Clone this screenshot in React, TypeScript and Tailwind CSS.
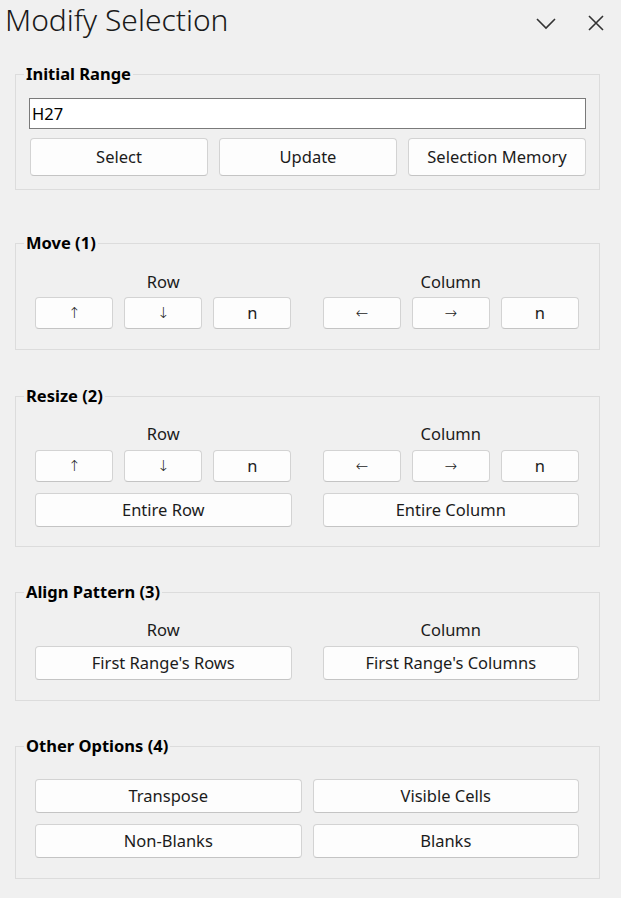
import type { ReactNode } from "react";

const font = { fontFamily: '"Noto Sans", "Open Sans", sans-serif' };
const arrowFont = { fontFamily: '"DejaVu Sans", "Liberation Sans", sans-serif' };

function Btn({ children, className = "" }: { children: ReactNode; className?: string }) {
  return (
    <button
      className={`flex items-center justify-center rounded-[4px] border border-[#d3d3d3] border-b-[#c4c4c4] bg-[#fdfdfd] text-[16.5px] text-[#1b1b1b] ${className}`}
    >
      {children}
    </button>
  );
}

function Group({
  title,
  className = "",
  inner = "",
  children,
}: {
  title: string;
  className?: string;
  inner?: string;
  children: ReactNode;
}) {
  return (
    <fieldset className={`ml-[15px] mr-[21px] border border-[#dcdcdc] ${className}`}>
      <legend className="ml-[8px] px-[2px] text-[16.5px] font-bold leading-[22px] text-black">
        {title}
      </legend>
      <div className={inner}>{children}</div>
    </fieldset>
  );
}

function ArrowRow({ labels }: { labels: string[] }) {
  return (
    <div className="flex gap-[11px]">
      {labels.map((l, i) => (
        <Btn key={i} className="h-[32px] w-[78px]">
          {l === "n" ? (
            l
          ) : (
            <span style={arrowFont} className="text-[15px] font-light leading-none">
              {l}
            </span>
          )}
        </Btn>
      ))}
    </div>
  );
}

function Label({ children }: { children: ReactNode }) {
  return <div className="text-[16.5px] leading-[22px] text-[#1b1b1b]">{children}</div>;
}

export default function App() {
  return (
    <div className="h-[898px] w-[621px] overflow-hidden bg-[#f0f0f0] text-black" style={font}>
      {/* header */}
      <div className="flex h-[63px] items-start justify-between">
        <h1 className="ml-[5px] mt-[0px] text-[30px] font-light leading-[40px] text-[#1a1a1a]">
          Modify Selection
        </h1>
        <div className="mr-[16px] mt-[14px] flex items-center gap-[30px]">
          <svg width="22" height="14" viewBox="0 0 22 14" fill="none">
            <path d="M2 3 L11 12 L20 3" stroke="#333" strokeWidth="1.6" />
          </svg>
          <svg width="18" height="18" viewBox="0 0 18 18" fill="none">
            <path d="M2 2 L16 16 M16 2 L2 16" stroke="#333" strokeWidth="1.6" />
          </svg>
        </div>
      </div>

      {/* Initial Range */}
      <Group title="Initial Range" inner="px-[13px] pb-[13px] pt-[13px]">
        <input
          readOnly
          value="H27"
          className="block h-[31px] w-full border border-[#7a7a7a] bg-white px-[2px] text-[16.5px] text-black outline-none"
          style={font}
        />
        <div className="mt-[9px] grid grid-cols-3 gap-[11px] pl-[1px]">
          <Btn className="h-[38px]">Select</Btn>
          <Btn className="h-[38px]">Update</Btn>
          <Btn className="h-[38px]">Selection Memory</Btn>
        </div>
      </Group>

      {/* Move */}
      <Group title="Move (1)" className="mt-[42px]" inner="pl-[19px] pr-[20px] pb-[20px] pt-[17px]">
        <div className="grid grid-cols-2 gap-[31px]">
          <div className="flex flex-col items-center">
            <Label>Row</Label>
            <div className="mt-[4px]">
              <ArrowRow labels={["↑", "↓", "n"]} />
            </div>
          </div>
          <div className="flex flex-col items-center">
            <Label>Column</Label>
            <div className="mt-[4px]">
              <ArrowRow labels={["←", "→", "n"]} />
            </div>
          </div>
        </div>
      </Group>

      {/* Resize */}
      <Group title="Resize (2)" className="mt-[35px]" inner="pl-[19px] pr-[20px] pb-[19px] pt-[16px]">
        <div className="grid grid-cols-2 gap-[31px]">
          <div className="flex flex-col items-center">
            <Label>Row</Label>
            <div className="mt-[5px]">
              <ArrowRow labels={["↑", "↓", "n"]} />
            </div>
            <Btn className="mt-[11px] h-[34px] w-full">Entire Row</Btn>
          </div>
          <div className="flex flex-col items-center">
            <Label>Column</Label>
            <div className="mt-[5px]">
              <ArrowRow labels={["←", "→", "n"]} />
            </div>
            <Btn className="mt-[11px] h-[34px] w-full">Entire Column</Btn>
          </div>
        </div>
      </Group>

      {/* Align Pattern */}
      <Group title="Align Pattern (3)" className="mt-[34px]" inner="pl-[19px] pr-[20px] pb-[20px] pt-[16px]">
        <div className="grid grid-cols-2 gap-[31px]">
          <div className="flex flex-col items-center">
            <Label>Row</Label>
            <Btn className="mt-[5px] h-[34px] w-full">First Range's Rows</Btn>
          </div>
          <div className="flex flex-col items-center">
            <Label>Column</Label>
            <Btn className="mt-[5px] h-[34px] w-full">First Range's Columns</Btn>
          </div>
        </div>
      </Group>

      {/* Other Options */}
      <Group title="Other Options (4)" className="mt-[34px]" inner="pl-[19px] pr-[20px] pb-[20px] pt-[22px]">
        <div className="grid grid-cols-2 gap-x-[11px] gap-y-[11px]">
          <Btn className="h-[34px]">Transpose</Btn>
          <Btn className="h-[34px]">Visible Cells</Btn>
          <Btn className="h-[34px]">Non-Blanks</Btn>
          <Btn className="h-[34px]">Blanks</Btn>
        </div>
      </Group>
    </div>
  );
}
